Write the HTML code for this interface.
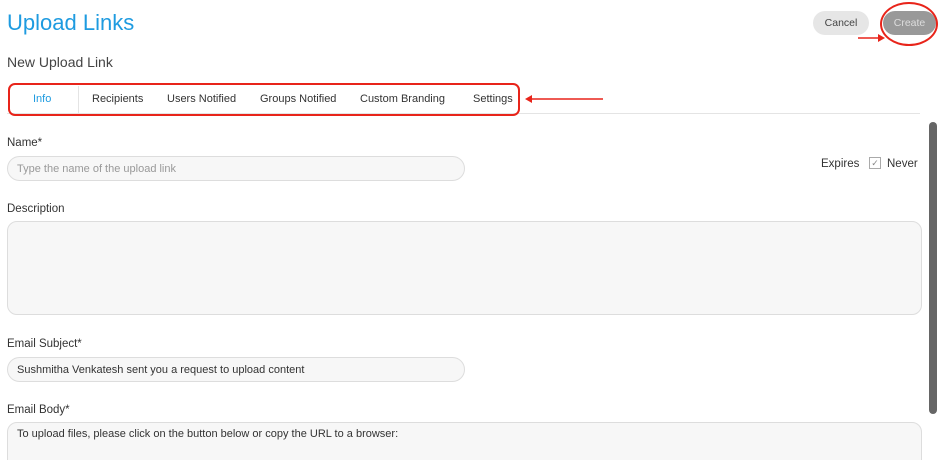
<!DOCTYPE html>
<html><head><style>
*{box-sizing:border-box;margin:0;padding:0}
html,body{width:940px;height:460px;overflow:hidden}
body{background:#fff;font-family:"Liberation Sans",sans-serif;position:relative;color:#333}
.a{position:absolute}
.lbl{font-size:11.5px;color:#333}
.inp{background:#f7f7f7;border:1px solid #ddd;font-size:11px;color:#999;padding-left:9px;display:flex;align-items:center}
.tab{position:absolute;top:93px;font-size:11px;color:#333}
</style></head><body>
<div class="a" style="left:7px;top:10px;font-size:22px;color:#1e9be0">Upload Links</div>
<div class="a" style="left:7px;top:54px;font-size:14px;color:#444">New Upload Link</div>
<div class="a" style="left:813px;top:11px;width:56px;height:24px;border-radius:12px;background:#e6e6e6;font-size:10.5px;color:#444;text-align:center;line-height:24px">Cancel</div>
<div class="a" style="left:883px;top:11px;width:53px;height:24px;border-radius:12px;background:#999;font-size:10.5px;color:#ddd;text-align:center;line-height:24px">Create</div>
<div class="a" style="left:880px;top:2px;width:58px;height:44px;border:2px solid #e8241a;border-radius:50%"></div>
<svg class="a" style="left:856px;top:32px" width="30" height="12"><line x1="2" y1="6" x2="24" y2="6" stroke="#e8241a" stroke-width="1.5"/><path d="M22 2L29 6L22 10Z" fill="#e8241a"/></svg>
<div class="a" style="left:7px;top:113px;width:913px;height:1px;background:#e4e4e4"></div>
<div class="a" style="left:78px;top:86px;width:1px;height:28px;background:#e4e4e4"></div>
<div class="tab" style="left:33px;color:#1e9be0">Info</div>
<div class="tab" style="left:92px">Recipients</div>
<div class="tab" style="left:167px">Users Notified</div>
<div class="tab" style="left:260px">Groups Notified</div>
<div class="tab" style="left:360px">Custom Branding</div>
<div class="tab" style="left:473px">Settings</div>
<div class="a" style="left:8px;top:83px;width:512px;height:33px;border:2px solid #e8241a;border-radius:7px"></div>
<svg class="a" style="left:524px;top:93px" width="80" height="12"><line x1="6" y1="6" x2="79" y2="6" stroke="#e8241a" stroke-width="1.5"/><path d="M8 2L1 6L8 10Z" fill="#e8241a"/></svg>
<div class="a" style="left:929px;top:122px;width:8px;height:292px;border-radius:4px;background:#666"></div>
<div class="a lbl" style="left:7px;top:137px">Name*</div>
<div class="a inp" style="left:7px;top:156px;width:458px;height:25px;border-radius:13px">Type the name of the upload link</div>
<div class="a lbl" style="left:821px;top:158px">Expires</div>
<div class="a" style="left:869px;top:157px;width:12px;height:12px;border:1px solid #aaa;font-size:9px;color:#888;line-height:10px;text-align:center">✓</div>
<div class="a lbl" style="left:887px;top:158px">Never</div>
<div class="a lbl" style="left:7px;top:203px">Description</div>
<div class="a inp" style="left:7px;top:221px;width:915px;height:94px;border-radius:10px"></div>
<div class="a lbl" style="left:7px;top:338px">Email Subject*</div>
<div class="a inp" style="left:7px;top:357px;width:458px;height:25px;border-radius:13px;color:#333">Sushmitha Venkatesh sent you a request to upload content</div>
<div class="a lbl" style="left:7px;top:404px">Email Body*</div>
<div class="a inp" style="left:7px;top:422px;width:915px;height:60px;border-radius:10px;color:#333;align-items:flex-start;padding-top:5px">To upload files, please click on the button below or copy the URL to a browser:</div>
</body></html>
